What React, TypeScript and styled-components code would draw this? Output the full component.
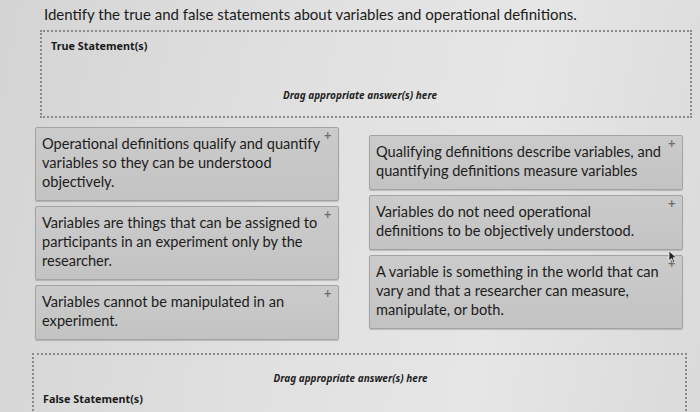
import React from "react";
import styled, { createGlobalStyle } from "styled-components";

const Global = createGlobalStyle`
  html, body { margin: 0; padding: 0; }
  body {
    width: 700px;
    height: 412px;
    overflow: hidden;
    background: linear-gradient(100deg, #d4d4d4 0%, #e0e0e0 40%, #e6e6e6 70%, #dadada 100%);
    font-family: "Lato", "Noto Sans", sans-serif;
    color: #1e1e1e;
  }
`;

const Page = styled.div`
  position: relative;
  width: 700px;
  height: 412px;
  padding: 4px 0 0 0;
  box-sizing: border-box;
`;

const Title = styled.h1`
  margin: 0 0 6px 44px;
  font-family: "Lato", "Noto Sans", sans-serif;
  font-weight: 400;
  font-size: 15px;
  line-height: 20px;
  color: #1b1b1b;
`;

const Zone = styled.div<{ $left: number; $right: number; $height: number }>`
  margin-left: ${(p) => p.$left}px;
  width: ${(p) => 700 - p.$left - p.$right}px;
  height: ${(p) => p.$height}px;
  box-sizing: border-box;
  border: 2px dotted #8a8a8a;
  display: flex;
  flex-direction: column;
  padding: 7px 9px;
  font-family: "Noto Sans", "Lato", sans-serif;
`;

const ZoneLabel = styled.div`
  font-size: 10.8px;
  line-height: 14px;
  font-weight: 700;
  color: #1a1a1a;
`;

const DropHint = styled.div<{ $offset: number }>`
  align-self: center;
  font-size: 10px;
  line-height: 13px;
  font-weight: 700;
  font-style: italic;
  color: #1f1f1f;
  margin-left: ${(p) => p.$offset}px;
`;

const Spacer = styled.div<{ $h: number }>`
  height: ${(p) => p.$h}px;
  flex: none;
`;

const Columns = styled.div`
  display: grid;
  grid-template-columns: 304px 314px;
  column-gap: 30px;
  margin: 9px 0 0 35px;
  align-items: start;
`;

const Column = styled.div<{ $top: number }>`
  display: flex;
  flex-direction: column;
  gap: 5px;
  margin-top: ${(p) => p.$top}px;
`;

const Card = styled.div`
  position: relative;
  box-sizing: border-box;
  background: linear-gradient(180deg, #cbcbcb 0%, #c3c3c3 100%);
  border: 1px solid #a3a3a3;
  border-radius: 2px;
  box-shadow: 0 1px 1px rgba(0, 0, 0, 0.18);
  padding: 6px 12px 9px 6px;
  font-family: "Lato", "Noto Sans", sans-serif;
  font-size: 14.6px;
  line-height: 19px;
  color: #1c1c1c;
`;

const Line = styled.span`
  display: block;
  white-space: nowrap;
`;

const Plus = styled.span`
  position: absolute;
  top: 3px;
  right: 6px;
  font-size: 10px;
  line-height: 10px;
  font-weight: 700;
  color: #6a6a6a;
  font-family: "DejaVu Sans", sans-serif;
`;

const Cursor = styled.svg`
  position: absolute;
  left: 668px;
  top: 250px;
`;

const leftCards = [
  ["Operational definitions qualify and quantify", "variables so they can be understood", "objectively."],
  ["Variables are things that can be assigned to", "participants in an experiment only by the", "researcher."],
  ["Variables cannot be manipulated in an", "experiment."],
];

const rightCards = [
  ["Qualifying definitions describe variables, and", "quantifying definitions measure variables"],
  ["Variables do not need operational", "definitions to be objectively understood."],
  ["A variable is something in the world that can", "vary and that a researcher can measure,", "manipulate, or both."],
];

function StatementCard({ lines }: { lines: string[] }) {
  return (
    <Card>
      {lines.map((l) => (
        <Line key={l}>{l}</Line>
      ))}
      <Plus>+</Plus>
    </Card>
  );
}

export default function App() {
  return (
    <Page>
      <Global />
      <Title>Identify the true and false statements about variables and operational definitions.</Title>
      <Zone $left={40} $right={8} $height={88}>
        <ZoneLabel>True Statement(s)</ZoneLabel>
        <Spacer $h={36} />
        <DropHint $offset={-12}>Drag appropriate answer(s) here</DropHint>
      </Zone>
      <Columns>
        <Column $top={0}>
          {leftCards.map((c) => (
            <StatementCard key={c[0]} lines={c} />
          ))}
        </Column>
        <Column $top={8}>
          {rightCards.map((c) => (
            <StatementCard key={c[0]} lines={c} />
          ))}
        </Column>
      </Columns>
      <Spacer $h={13} />
      <Zone $left={32} $right={13} $height={62}>
        <Spacer $h={10} />
        <DropHint $offset={-18}>Drag appropriate answer(s) here</DropHint>
        <Spacer $h={7} />
        <ZoneLabel>False Statement(s)</ZoneLabel>
      </Zone>
      <Cursor width="10" height="14" viewBox="0 0 10 14">
        <path d="M1 1 L1 11 L3.5 8.5 L5.5 13 L7 12.3 L5 7.8 L8.5 7.8 Z" fill="#222" stroke="#eee" strokeWidth="0.8" />
      </Cursor>
    </Page>
  );
}
